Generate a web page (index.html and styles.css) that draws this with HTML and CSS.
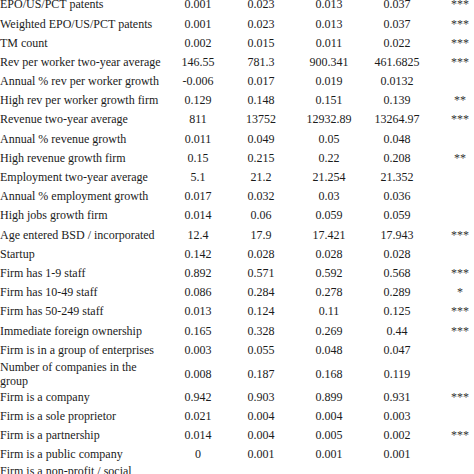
FILE: index.html
```html
<!DOCTYPE html>
<html>
<head>
<meta charset="utf-8">
<link rel="stylesheet" href="styles.css">
</head>
<body>
<div class="table">
  <div class="row"><div class="label">EPO/US/PCT patents</div><div class="v">0.001</div><div class="v">0.023</div><div class="v">0.013</div><div class="v">0.037</div><div class="sig">***</div></div>
  <div class="row"><div class="label">Weighted EPO/US/PCT patents</div><div class="v">0.001</div><div class="v">0.023</div><div class="v">0.013</div><div class="v">0.037</div><div class="sig">***</div></div>
  <div class="row"><div class="label">TM count</div><div class="v">0.002</div><div class="v">0.015</div><div class="v">0.011</div><div class="v">0.022</div><div class="sig">***</div></div>
  <div class="row"><div class="label">Rev per worker two-year average</div><div class="v">146.55</div><div class="v">781.3</div><div class="v">900.341</div><div class="v">461.6825</div><div class="sig">***</div></div>
  <div class="row"><div class="label">Annual % rev per worker growth</div><div class="v">-0.006</div><div class="v">0.017</div><div class="v">0.019</div><div class="v">0.0132</div><div class="sig"></div></div>
  <div class="row"><div class="label">High rev per worker growth firm</div><div class="v">0.129</div><div class="v">0.148</div><div class="v">0.151</div><div class="v">0.139</div><div class="sig">**</div></div>
  <div class="row"><div class="label">Revenue two-year average</div><div class="v">811</div><div class="v">13752</div><div class="v">12932.89</div><div class="v">13264.97</div><div class="sig">***</div></div>
  <div class="row"><div class="label">Annual % revenue growth</div><div class="v">0.011</div><div class="v">0.049</div><div class="v">0.05</div><div class="v">0.048</div><div class="sig"></div></div>
  <div class="row"><div class="label">High revenue growth firm</div><div class="v">0.15</div><div class="v">0.215</div><div class="v">0.22</div><div class="v">0.208</div><div class="sig">**</div></div>
  <div class="row"><div class="label">Employment two-year average</div><div class="v">5.1</div><div class="v">21.2</div><div class="v">21.254</div><div class="v">21.352</div><div class="sig"></div></div>
  <div class="row"><div class="label">Annual % employment growth</div><div class="v">0.017</div><div class="v">0.032</div><div class="v">0.03</div><div class="v">0.036</div><div class="sig"></div></div>
  <div class="row"><div class="label">High jobs growth firm</div><div class="v">0.014</div><div class="v">0.06</div><div class="v">0.059</div><div class="v">0.059</div><div class="sig"></div></div>
  <div class="row"><div class="label">Age entered BSD / incorporated</div><div class="v">12.4</div><div class="v">17.9</div><div class="v">17.421</div><div class="v">17.943</div><div class="sig">***</div></div>
  <div class="row"><div class="label">Startup</div><div class="v">0.142</div><div class="v">0.028</div><div class="v">0.028</div><div class="v">0.028</div><div class="sig"></div></div>
  <div class="row"><div class="label">Firm has 1-9 staff</div><div class="v">0.892</div><div class="v">0.571</div><div class="v">0.592</div><div class="v">0.568</div><div class="sig">***</div></div>
  <div class="row"><div class="label">Firm has 10-49 staff</div><div class="v">0.086</div><div class="v">0.284</div><div class="v">0.278</div><div class="v">0.289</div><div class="sig">*</div></div>
  <div class="row"><div class="label">Firm has 50-249 staff</div><div class="v">0.013</div><div class="v">0.124</div><div class="v">0.11</div><div class="v">0.125</div><div class="sig">***</div></div>
  <div class="row"><div class="label">Immediate foreign ownership</div><div class="v">0.165</div><div class="v">0.328</div><div class="v">0.269</div><div class="v">0.44</div><div class="sig">***</div></div>
  <div class="row"><div class="label">Firm is in a group of enterprises</div><div class="v">0.003</div><div class="v">0.055</div><div class="v">0.048</div><div class="v">0.047</div><div class="sig"></div></div>
  <div class="row tall"><div class="label">Number of companies in the group</div><div class="v">0.008</div><div class="v">0.187</div><div class="v">0.168</div><div class="v">0.119</div><div class="sig"></div></div>
  <div class="row"><div class="label">Firm is a company</div><div class="v">0.942</div><div class="v">0.903</div><div class="v">0.899</div><div class="v">0.931</div><div class="sig">***</div></div>
  <div class="row"><div class="label">Firm is a sole proprietor</div><div class="v">0.021</div><div class="v">0.004</div><div class="v">0.004</div><div class="v">0.003</div><div class="sig"></div></div>
  <div class="row"><div class="label">Firm is a partnership</div><div class="v">0.014</div><div class="v">0.004</div><div class="v">0.005</div><div class="v">0.002</div><div class="sig">***</div></div>
  <div class="row"><div class="label">Firm is a public company</div><div class="v">0</div><div class="v">0.001</div><div class="v">0.001</div><div class="v">0.001</div><div class="sig"></div></div>
  <div class="row tall"><div class="label">Firm is a non-profit / social enterprise</div><div class="v"></div><div class="v"></div><div class="v"></div><div class="v"></div><div class="sig"></div></div>
</div>
</body>
</html>
```

FILE: styles.css
```css
html, body {
  margin: 0;
  padding: 0;
  background: #ffffff;
  overflow: hidden;
}

body {
  width: 474px;
  height: 474px;
  font-family: "Liberation Serif", "Times New Roman", serif;
  font-size: 12px;
  color: #1b1b1b;
}

.table {
  margin-top: -4.9px;
  width: 494px;
}

.row {
  display: grid;
  grid-template-columns: 164px 68px 58px 78px 58px 68px;
  align-items: center;
  height: 19.2px;
  line-height: 14.7px;
}

.row.tall {
  height: 27.6px;
}

.label {
  text-align: left;
  padding-left: 0;
}

.v {
  text-align: center;
  white-space: nowrap;
}

.sig {
  text-align: center;
  white-space: nowrap;
  color: #333;
}
```
